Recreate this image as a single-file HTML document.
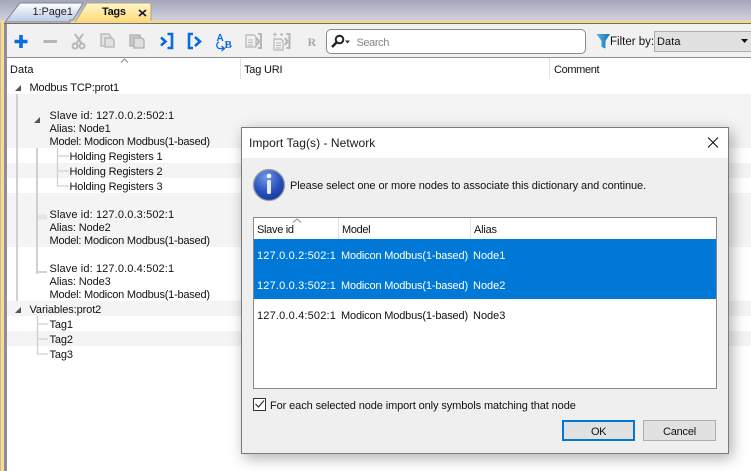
<!DOCTYPE html>
<html><head><meta charset="utf-8">
<style>
html,body{margin:0;padding:0;width:751px;height:471px;overflow:hidden;background:#fff;}
body{position:relative;font-family:"Liberation Sans",sans-serif;font-size:11px;color:#111;}
.a{position:absolute;}
.t{position:absolute;white-space:nowrap;line-height:15px;margin-top:1px;}
svg{position:absolute;overflow:visible;}
</style></head><body>
<!-- tab strip -->
<div class="a" style="left:0;top:0;width:751px;height:22px;background:linear-gradient(#a4a6ba,#d4d4e0);"></div>
<div class="a" style="left:0;top:20px;width:751px;height:1px;background:#e8d9a0;"></div>
<div class="a" style="left:0;top:21px;width:751px;height:2px;background:#f3d98a;"></div>
<svg style="left:0;top:0" width="160" height="24">
<defs><linearGradient id="g1" x1="0" y1="0" x2="0" y2="1"><stop offset="0" stop-color="#ffffff"/><stop offset="1" stop-color="#b9c9e6"/></linearGradient>
<linearGradient id="g2" x1="0" y1="0" x2="0" y2="1"><stop offset="0" stop-color="#fff6c8"/><stop offset="1" stop-color="#ffd97a"/></linearGradient></defs>
<path d="M5 22 L20 3 H83 L73 20 H70 V22 Z" fill="url(#g1)" stroke="#7a8296" stroke-width="1"/>
<path d="M75 22 L87 3 H151 V22 Z" fill="url(#g2)"/>
<path d="M75 22 L87 3 H151 V21" fill="none" stroke="#a8a488" stroke-width="1"/>
<path d="M139 10 L146 16 M146 10 L139 16" stroke="#101830" stroke-width="1.600"/>
</svg>
<div class="t" style="left:32.500px;top:4px;letter-spacing:-.1px;color:#222;font-size:11px;">1:Page1</div>
<div class="t" style="left:102px;top:4px;font-weight:bold;letter-spacing:-.3px;color:#111;">Tags</div>
<!-- frame -->
<div class="a" style="left:1px;top:23px;width:3px;height:448px;background:#ffdc82;"></div>
<div class="a" style="left:4px;top:23px;width:3px;height:448px;background:#8a8f9c;"></div>
<div class="a" style="left:0;top:23px;width:1px;height:448px;background:#b9b9c4;"></div>
<div class="a" style="left:4px;top:23px;width:747px;height:1px;background:#707070;"></div>
<!-- toolbar -->
<div class="a" style="left:7px;top:24px;width:744px;height:33px;background:#f1f1f1;"></div>
<div class="a" style="left:7px;top:57px;width:744px;height:1px;background:#8f8f8f;"></div>
<svg style="left:0;top:0" width="360" height="60">
<path d="M21 35 V48 M14.500 41.500 H27.500" stroke="#0a6ae0" stroke-width="3.600" fill="none"/>
<path d="M43.500 41.500 H57" stroke="#b5b5b5" stroke-width="3" fill="none"/>
<g stroke="#b8b8b8" stroke-width="2" fill="none"><path d="M75 34 L82 44 M83 34 L76 44"/><circle cx="75" cy="46" r="2.500"/><circle cx="82" cy="46" r="2.500"/></g>
<g fill="#e2e2e2" stroke="#b5b5b5" stroke-width="1.300"><path d="M101 34 h8 l2 3 v9 h-10 z"/><path d="M105 38 h7 l2 2 v7 h-9 z"/></g>
<g fill="#c9c9c9" stroke="#b0b0b0" stroke-width="1.300"><path d="M130 35 h10 v11 h-10 z"/><path d="M134 38 h8 l2 2 v8 h-10 z" fill="#dedede"/></g>
<path d="M161 37.500 L165.500 41.500 L161 45.500" stroke="#0a6ae0" stroke-width="2.600" fill="none"/>
<path d="M167.500 34 H172 V48 H167.500" stroke="#0a6ae0" stroke-width="2.600" fill="none"/>
<path d="M193 34 H189 V48 H193" stroke="#0a6ae0" stroke-width="2.600" fill="none"/>
<path d="M195 37 L200 41.500 L195 46" stroke="#0a6ae0" stroke-width="2.600" fill="none"/>
<text x="216.500" y="41" font-family="Liberation Sans" font-weight="bold" font-size="10" fill="#0a6ae0">A</text>
<text x="224.500" y="48" font-family="Liberation Serif" font-weight="bold" font-size="11" fill="#0a6ae0">B</text>
<path d="M219 42 A3.500 3.500 0 0 0 219 48.500 H224 M221.500 46 L224.500 48.500 L221.500 51" stroke="#0a6ae0" stroke-width="1.300" fill="none"/>
<g stroke="#b5b5b5" fill="none"><path d="M246 35 h8 l2 2 v10 h-10 z" stroke-width="1.200"/><path d="M248 40 h5 M248 42.500 h5 M248 45 h5" stroke-width="1"/><path d="M256.500 38 L259 41.500 L256.500 45" stroke-width="2"/><path d="M258 34 H261 V48 H258" stroke-width="2"/></g>
<g stroke="#b5b5b5" fill="none"><path d="M274 39 h7 l2 2 v9 h-9 z" stroke-width="1.200"/><path d="M276 43 h5 M276 45.500 h5 M276 48 h5" stroke-width="1"/><path d="M285 38 L287.500 41.500 L285 45" stroke-width="2"/><path d="M286.500 34 H289.500 V48 H286.500" stroke-width="2"/><path d="M273 34.500 h4 M275 32.500 v4 M280 34.500 h3 M281.500 33 v3" stroke-width="1"/></g>
<text x="307.500" y="46" font-family="Liberation Serif" font-weight="bold" font-size="12" fill="#a8a8a8">R</text>
</svg>
<!-- search -->
<div class="a" style="left:326px;top:29px;width:258px;height:23px;background:#fff;border:1px solid #8a8a8a;border-radius:5px;"></div>
<svg style="left:0;top:0" width="360" height="60">
<circle cx="339.500" cy="39.500" r="3.800" fill="none" stroke="#222" stroke-width="2"/>
<path d="M336.500 42.500 L332 47" stroke="#222" stroke-width="2.600"/>
<path d="M345 40.500 h5 l-2.500 3 z" fill="#333"/>
</svg>
<div class="t" style="left:356.500px;top:34.500px;color:#888;letter-spacing:-.4px;">Search</div>
<!-- filter -->
<svg style="left:0;top:0" width="751" height="60">
<defs><linearGradient id="f" x1="0" y1="0" x2="1" y2="0"><stop offset="0" stop-color="#5ab4e6"/><stop offset="1" stop-color="#0e6fb0"/></linearGradient></defs>
<path d="M596.500 34 H610 L605.500 41 V48.500 L601.500 47 V41 Z" fill="url(#f)"/>
</svg>
<div class="t" style="left:610px;top:33.500px;color:#111;font-size:11.500px;letter-spacing:0;">Filter by:</div>
<div class="a" style="left:654px;top:31px;width:97px;height:19px;background:#e1e1e1;border:1px solid #adadad;border-right:0;"></div>
<div class="t" style="left:657px;top:33.500px;color:#111;letter-spacing:.1px;">Data</div>
<svg style="left:0;top:0" width="751" height="60"><path d="M741 39 h7 l-3.500 4 z" fill="#111"/></svg>
<!-- header -->
<div class="a" style="left:240px;top:58px;width:1px;height:21px;background:#e3e3e3;"></div>
<div class="a" style="left:549px;top:58px;width:1px;height:21px;background:#e3e3e3;"></div>
<svg style="left:0;top:0" width="140" height="70"><path d="M121 62.500 L124.500 59 L128 62.500" stroke="#888" fill="none"/></svg>
<div class="t" style="left:10px;top:62px;letter-spacing:.1px;">Data</div>
<div class="t" style="left:244px;top:62px;letter-spacing:-.2px;">Tag URI</div>
<div class="t" style="left:554px;top:62px;letter-spacing:-.35px;">Comment</div>
<!-- stripes -->
<div class="a" style="left:7px;top:94px;width:744px;height:54px;background:#f4f4f4;"></div>
<div class="a" style="left:7px;top:163px;width:744px;height:15px;background:#f4f4f4;"></div>
<div class="a" style="left:7px;top:193px;width:744px;height:54px;background:#f4f4f4;"></div>
<div class="a" style="left:7px;top:301px;width:744px;height:15px;background:#f4f4f4;"></div>
<div class="a" style="left:7px;top:331px;width:744px;height:15px;background:#f4f4f4;"></div>
<!-- tree lines -->
<svg style="left:0;top:0" width="240" height="471">
<g fill="none" stroke="#d2d0cc">
<path d="M17 94 V301" stroke-width="2"/>
<path d="M37 148 V274" stroke-width="2"/>
<path d="M37 272 H47" stroke-width="2"/>
<path d="M37 217 H47" stroke-width="5" opacity=".45"/>
<path d="M57.500 148 V186 H69 M57.500 156 H69 M57.500 171 H69" stroke-width="1.300"/>
<path d="M37.500 316 V354 H48 M37.500 324 H48 M37.500 339 H48" stroke-width="1.300"/>
</g>
<g fill="#555"><path d="M15 91 h6 v-6 z"/><path d="M34 123 h6 v-6 z"/><path d="M15 313 h6 v-6 z"/></g>
</svg>
<!-- tree text -->
<div class="t" style="left:29.500px;top:79.500px;letter-spacing:-.17px;">Modbus TCP:prot1</div>
<div class="t" style="left:49.500px;top:108px;letter-spacing:.12px;">Slave id: 127.0.0.2:502:1</div>
<div class="t" style="left:49.500px;top:120.500px;letter-spacing:-.1px;">Alias: Node1</div>
<div class="t" style="left:49.500px;top:133.500px;letter-spacing:-.22px;">Model: Modicon Modbus(1-based)</div>
<div class="t" style="left:69.500px;top:148.500px;letter-spacing:-.16px;">Holding Registers 1</div>
<div class="t" style="left:69.500px;top:163.500px;letter-spacing:-.16px;">Holding Registers 2</div>
<div class="t" style="left:69.500px;top:178.500px;letter-spacing:-.16px;">Holding Registers 3</div>
<div class="t" style="left:49.500px;top:206.500px;letter-spacing:.12px;">Slave id: 127.0.0.3:502:1</div>
<div class="t" style="left:49.500px;top:219.500px;letter-spacing:-.1px;">Alias: Node2</div>
<div class="t" style="left:49.500px;top:232.500px;letter-spacing:-.22px;">Model: Modicon Modbus(1-based)</div>
<div class="t" style="left:49.500px;top:260.500px;letter-spacing:.12px;">Slave id: 127.0.0.4:502:1</div>
<div class="t" style="left:49.500px;top:273.500px;letter-spacing:-.1px;">Alias: Node3</div>
<div class="t" style="left:49.500px;top:286.500px;letter-spacing:-.22px;">Model: Modicon Modbus(1-based)</div>
<div class="t" style="left:29.500px;top:301.500px;letter-spacing:-.1px;">Variables:prot2</div>
<div class="t" style="left:49.500px;top:316.500px;letter-spacing:-.1px;">Tag1</div>
<div class="t" style="left:49.500px;top:331.500px;letter-spacing:-.1px;">Tag2</div>
<div class="t" style="left:49.500px;top:346.500px;letter-spacing:-.1px;">Tag3</div>
<!-- dialog -->
<div class="a" style="left:241px;top:127px;width:486px;height:325px;background:#efefef;border:1px solid #7a7a7a;box-shadow:3px 4px 14px rgba(0,0,0,.32);"></div>
<div class="a" style="left:242px;top:128px;width:486px;height:30px;background:#fff;"></div>
<div class="t" style="left:249px;top:134.500px;font-size:12px;letter-spacing:.05px;color:#1a1a1a;">Import Tag(s) - Network</div>
<svg style="left:0;top:0" width="751" height="471">
<path d="M708 137.500 L718 147.500 M718 137.500 L708 147.500" stroke="#111" stroke-width="1.100"/>
<defs><radialGradient id="ib" cx=".4" cy=".25" r=".85"><stop offset="0" stop-color="#6f9ae8"/><stop offset=".55" stop-color="#2a52bc"/><stop offset="1" stop-color="#12309a"/></radialGradient></defs>
<circle cx="269" cy="185" r="15.500" fill="url(#ib)" stroke="#9aa0a8" stroke-width="1.300"/>
<circle cx="269" cy="176" r="2.300" fill="#fff"/>
<rect x="267" y="180" width="4" height="14" rx="1.500" fill="#e8eaf0"/>
</svg>
<div class="t" style="left:290px;top:177.500px;letter-spacing:-.08px;color:#111;">Please select one or more nodes to associate this dictionary and continue.</div>
<!-- list -->
<div class="a" style="left:253px;top:217px;width:462px;height:170px;background:#fff;border:1px solid #8a8a8a;"></div>
<div class="a" style="left:254px;top:239px;width:462px;height:60px;background:#0078d7;"></div>
<div class="a" style="left:338px;top:218px;width:1px;height:21px;background:#e3e3e3;"></div>
<div class="a" style="left:470px;top:218px;width:1px;height:21px;background:#e3e3e3;"></div>
<svg style="left:0;top:0" width="400" height="240"><path d="M293 222.500 L297 219 L301 222.500" stroke="#888" fill="none"/></svg>
<div class="t" style="left:257px;top:221.500px;letter-spacing:-.3px;">Slave id</div>
<div class="t" style="left:342px;top:221.500px;letter-spacing:-.35px;">Model</div>
<div class="t" style="left:474px;top:221.500px;letter-spacing:-.2px;">Alias</div>
<div class="t" style="left:257px;top:247.500px;color:#fff;letter-spacing:.17px;">127.0.0.2:502:1</div>
<div class="t" style="left:341px;top:247.500px;color:#fff;letter-spacing:-.17px;">Modicon Modbus(1-based)</div>
<div class="t" style="left:473px;top:247.500px;color:#fff;">Node1</div>
<div class="t" style="left:257px;top:277.500px;color:#fff;letter-spacing:.17px;">127.0.0.3:502:1</div>
<div class="t" style="left:341px;top:277.500px;color:#fff;letter-spacing:-.17px;">Modicon Modbus(1-based)</div>
<div class="t" style="left:473px;top:277.500px;color:#fff;">Node2</div>
<div class="t" style="left:257px;top:307.500px;letter-spacing:.17px;">127.0.0.4:502:1</div>
<div class="t" style="left:341px;top:307.500px;letter-spacing:-.17px;">Modicon Modbus(1-based)</div>
<div class="t" style="left:473px;top:307.500px;">Node3</div>
<!-- checkbox -->
<div class="a" style="left:253px;top:398px;width:11px;height:11px;background:#fff;border:1px solid #333;"></div>
<svg style="left:0;top:0" width="300" height="420"><path d="M255.500 404 L258.500 407 L264 400.500" stroke="#333" stroke-width="1.200" fill="none"/></svg>
<div class="t" style="left:270px;top:397.500px;letter-spacing:-.1px;color:#111;">For each selected node import only symbols matching that node</div>
<!-- buttons -->
<div class="a" style="left:562px;top:420px;width:69px;height:17px;background:#e1e1e1;border:2px solid #0078d7;"></div>
<div class="t" style="left:562px;top:423.500px;width:73px;text-align:center;color:#111;letter-spacing:-.5px;">OK</div>
<div class="a" style="left:643px;top:420px;width:71px;height:19px;background:#e1e1e1;border:1px solid #adadad;"></div>
<div class="t" style="left:643px;top:423.500px;width:73px;text-align:center;color:#111;letter-spacing:-.2px;">Cancel</div>
</body></html>
